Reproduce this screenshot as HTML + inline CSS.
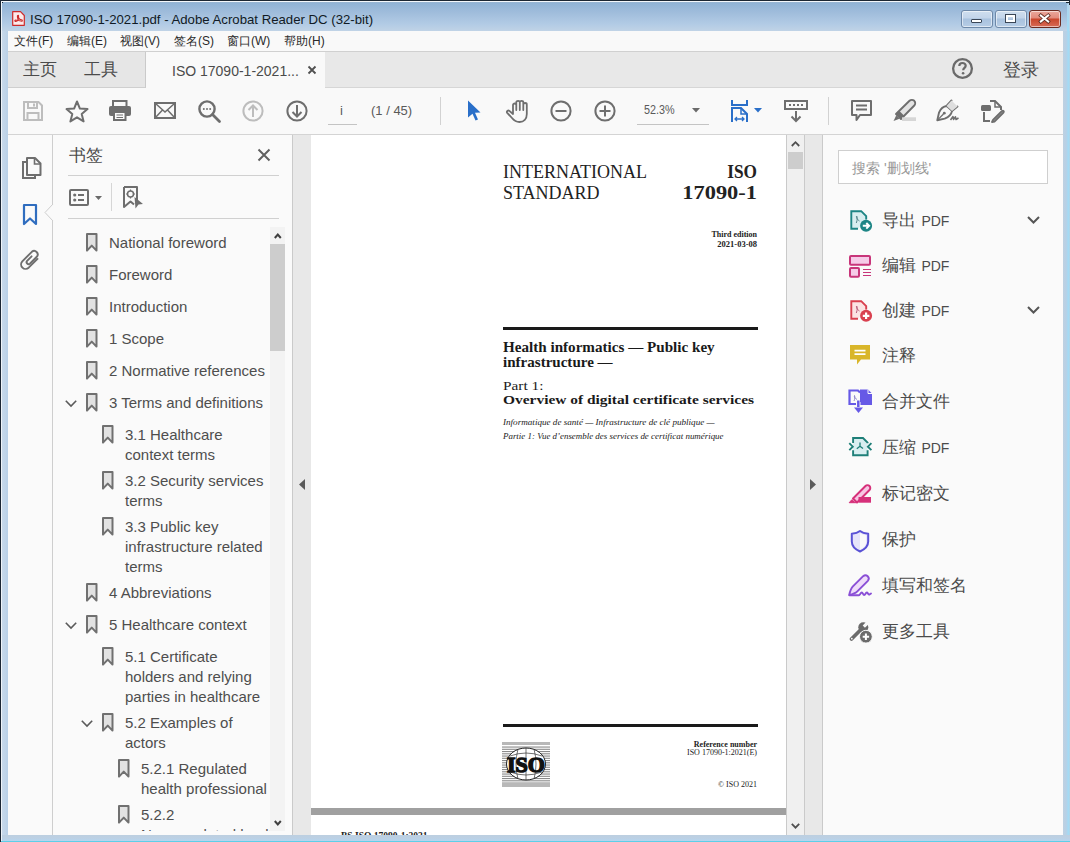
<!DOCTYPE html>
<html><head><meta charset="utf-8"><style>
*{box-sizing:border-box;margin:0;padding:0}
html,body{width:1070px;height:842px;overflow:hidden}
body{position:relative;background:#bcd3e8;font-family:"Liberation Sans",sans-serif;color:#333}
.a{position:absolute}
.t{position:absolute;white-space:nowrap;line-height:1}
svg{position:absolute;overflow:visible}
.bm{color:#4e4e4e;font-size:15px}
.tl{color:#4b4b4b;font-size:17px}
</style></head><body>
<div class="a" style="left:0px;top:0px;width:1070px;height:842px;background:#bcd3e8;"></div>
<div class="a" style="left:2px;top:2px;width:1066px;height:29px;background:linear-gradient(#9cb6cf 0px,#90b3d6 1px,#9fbcdb 10px,#b2cbe5 22px,#c0d3e6 29px);"></div>
<div class="a" style="left:1063px;top:31px;width:7px;height:811px;background:linear-gradient(90deg,#bdd1e2 0px,#b8d0e5 3px,#a6d8f2 5px,#9fdcf6 6px,#b9cfdf 7px);"></div>
<div class="a" style="left:1067px;top:4px;width:2px;height:27px;background:linear-gradient(#b0d4ee,#9fdcf6);"></div>
<div class="a" style="left:1066px;top:0px;width:4px;height:3px;background:#1b2633;"></div>
<div class="a" style="left:1069px;top:3px;width:1px;height:2px;background:#1b2633;"></div>
<div class="a" style="left:0px;top:0px;width:3px;height:3px;background:#1b2633;"></div>
<div class="a" style="left:0px;top:3px;width:2px;height:2px;background:#1b2633;"></div>
<div class="a" style="left:0px;top:835px;width:1070px;height:6px;background:linear-gradient(#bccfe0,#bcd0e4 3px,#b4d4ee);"></div>
<div class="a" style="left:0px;top:841px;width:1070px;height:1px;background:#5ccfe8;"></div>
<div class="a" style="left:0px;top:0px;width:1070px;height:1px;background:#1b2633;"></div>
<div class="a" style="left:0px;top:0px;width:1px;height:842px;background:#1b2633;"></div>
<div class="a" style="left:1px;top:1px;width:1068px;height:1px;background:#f3f7fb;"></div>
<div class="a" style="left:1px;top:1px;width:1px;height:840px;background:#eef3f8;"></div>
<div class="a" style="left:2px;top:31px;width:6px;height:804px;background:linear-gradient(90deg,#c8d9ea,#b9d0e7);"></div>
<svg style="left:12px;top:11px;" width="13" height="15" viewBox="0 0 13 15"><path d="M0.7,0.7 H8.5 L12.3,4.5 V14.3 H0.7 Z" fill="#fdeaea" stroke="#cc2a2a" stroke-width="1.2" stroke-linejoin="round"/><path d="M6.3,4.2 C5,4.2 5.2,6.5 6.3,8.8 C5.5,10 4.2,10.5 3.4,10.4 C2.4,10.2 2.8,8.8 4,9 C5.5,9.2 8.5,10 9.6,10.2 C10.6,10.3 10.6,8.8 9.4,8.8 C8.4,8.8 7,7.8 6.6,6.8 C6.3,5.8 6.8,4.2 6.3,4.2 Z" fill="none" stroke="#cc2a2a" stroke-width="1.1"/></svg>
<div class="t" style="left:30px;top:13px;font-size:13.2px;color:#111a24;">ISO 17090-1-2021.pdf - Adobe Acrobat Reader DC (32-bit)</div>
<div class="a" style="left:961px;top:10px;width:32px;height:18px;border:1px solid #6d88a8;border-radius:3px;background:linear-gradient(#cfdeee 0px,#c3d5ea 7px,#a9c2de 8px,#b8cee6 17px);box-shadow:inset 0 0 0 1px rgba(255,255,255,.55)"></div>
<div class="a" style="left:995px;top:10px;width:32px;height:18px;border:1px solid #6d88a8;border-radius:3px;background:linear-gradient(#cfdeee 0px,#c3d5ea 7px,#a9c2de 8px,#b8cee6 17px);box-shadow:inset 0 0 0 1px rgba(255,255,255,.55)"></div>
<div class="a" style="left:1029px;top:10px;width:32px;height:18px;border:1px solid #6b2a20;border-radius:3px;background:linear-gradient(#eaa89c 0px,#e38b7c 7px,#c9462c 8px,#d9705c 17px);box-shadow:inset 0 0 0 1px rgba(255,255,255,.55)"></div>
<div class="a" style="left:971px;top:19px;width:11px;height:4px;background:#fff;border:1px solid #3a4656;border-radius:1px"></div>
<div class="a" style="left:1005px;top:14px;width:11px;height:9px;background:transparent;border:1px solid #3a4656;box-shadow:inset 0 0 0 2px #fff;"></div>
<svg style="left:1039px;top:14px;" width="11" height="9" viewBox="0 0 11 9"><path d="M1.8,1.5 L9.2,7.5 M9.2,1.5 L1.8,7.5" stroke="#5a2a20" stroke-width="3.6" stroke-linecap="square"/><path d="M1.8,1.5 L9.2,7.5 M9.2,1.5 L1.8,7.5" stroke="#fff" stroke-width="2" stroke-linecap="square"/></svg>
<div class="a" style="left:8px;top:31px;width:1055px;height:20px;background:#f9f9f9;"></div>
<div class="a" style="left:8px;top:51px;width:1055px;height:1px;background:#d0d0d0;"></div>
<div class="t" style="left:14px;top:35px;font-size:12px;color:#2a2a2a;">文件(F)</div>
<div class="t" style="left:67px;top:35px;font-size:12px;color:#2a2a2a;">编辑(E)</div>
<div class="t" style="left:120px;top:35px;font-size:12px;color:#2a2a2a;">视图(V)</div>
<div class="t" style="left:174px;top:35px;font-size:12px;color:#2a2a2a;">签名(S)</div>
<div class="t" style="left:227px;top:35px;font-size:12px;color:#2a2a2a;">窗口(W)</div>
<div class="t" style="left:284px;top:35px;font-size:12px;color:#2a2a2a;">帮助(H)</div>
<div class="a" style="left:8px;top:52px;width:1055px;height:36px;background:#e8e8e8;"></div>
<div class="a" style="left:8px;top:87px;width:1055px;height:1px;background:#d6d6d6;"></div>
<div class="a" style="left:8px;top:52px;width:138px;height:36px;background:#e6e6e6;border-right:1px solid #cacaca;border-bottom:1px solid #cfcfcf"></div>
<div class="a" style="left:146px;top:52px;width:179px;height:36px;background:#f9f9f9;"></div>
<div class="t" style="left:23px;top:61px;font-size:17px;color:#4b4b4b;">主页</div>
<div class="t" style="left:84px;top:61px;font-size:17px;color:#4b4b4b;">工具</div>
<div class="t" style="left:172px;top:64px;font-size:14px;color:#4b4b4b;">ISO 17090-1-2021...</div>
<svg style="left:307px;top:65px;" width="10" height="10" viewBox="0 0 10 10"><path d="M1.5,1.5 L8.5,8.5 M8.5,1.5 L1.5,8.5" stroke="#505050" stroke-width="1.8"/></svg>
<svg style="left:951px;top:57px;" width="23" height="23" viewBox="0 0 23 23"><circle cx="11.5" cy="11.5" r="9.4" fill="none" stroke="#6a6a6a" stroke-width="2.3"/><path d="M8.3,9 C8.3,6.8 9.8,6 11.5,6 C13.3,6 14.7,7.1 14.7,8.8 C14.7,10.8 12.2,11 12.2,13.2" fill="none" stroke="#6a6a6a" stroke-width="2.2"/><circle cx="12.1" cy="16.3" r="1.3" fill="#6a6a6a"/></svg>
<div class="t" style="left:1003px;top:61.5px;font-size:17.5px;color:#4b4b4b;">登录</div>
<div class="a" style="left:8px;top:88px;width:1055px;height:46px;background:#f9f9f9;"></div>
<div class="a" style="left:8px;top:134px;width:1055px;height:1px;background:#d4d4d4;"></div>
<svg style="left:23px;top:101px;" width="20" height="20" viewBox="0 0 20 20"><path d="M1,1 H15.5 L19,4.5 V19 H1 Z" fill="none" stroke="#bdbdbd" stroke-width="2"/><path d="M5,1 V7 H14 V1" fill="none" stroke="#bdbdbd" stroke-width="2"/><path d="M11,2.5 V5.5" stroke="#bdbdbd" stroke-width="2"/><path d="M4.5,19 V12 H15.5 V19" fill="none" stroke="#bdbdbd" stroke-width="2"/></svg>
<svg style="left:65px;top:100px;" width="24" height="23" viewBox="0 0 24 23"><path d="M12,1.5 L14.9,8.6 L22.5,9.1 L16.7,14 L18.6,21.4 L12,17.3 L5.4,21.4 L7.3,14 L1.5,9.1 L9.1,8.6 Z" fill="none" stroke="#6e6e6e" stroke-width="2" stroke-linejoin="round"/></svg>
<svg style="left:108px;top:100px;" width="24" height="21" viewBox="0 0 24 21"><path d="M5,6.5 V1 H18.5 V6.5" fill="none" stroke="#6e6e6e" stroke-width="2"/><rect x="1" y="6" width="22" height="10" rx="2" fill="#6e6e6e"/><rect x="6" y="12" width="11.5" height="8" fill="#f9f9f9" stroke="#6e6e6e" stroke-width="2"/><path d="M8.5,15 H15 M8.5,17.5 H15" stroke="#6e6e6e" stroke-width="1.2"/></svg>
<svg style="left:154px;top:102px;" width="22" height="17" viewBox="0 0 22 17"><rect x="1" y="1" width="20" height="15" fill="none" stroke="#6e6e6e" stroke-width="2"/><path d="M1.5,1.5 L11,10 L20.5,1.5 M1.5,15.5 L8.5,8 M20.5,15.5 L13.5,8" fill="none" stroke="#6e6e6e" stroke-width="1.5"/></svg>
<svg style="left:198px;top:100px;" width="23" height="23" viewBox="0 0 23 23"><circle cx="9" cy="9" r="7.6" fill="none" stroke="#6e6e6e" stroke-width="2.4"/><path d="M14.5,14.5 L21.5,21.5" stroke="#6e6e6e" stroke-width="2.8" stroke-linecap="round"/><circle cx="5.8" cy="9" r="1" fill="#6e6e6e"/><circle cx="9" cy="9" r="1" fill="#6e6e6e"/><circle cx="12.2" cy="9" r="1" fill="#6e6e6e"/></svg>
<svg style="left:242px;top:100px;" width="22" height="22" viewBox="0 0 22 22"><circle cx="11" cy="11" r="9.6" fill="none" stroke="#bdbdbd" stroke-width="2"/><path d="M11,17 V5.5 M6.5,10 L11,5.5 L15.5,10" fill="none" stroke="#bdbdbd" stroke-width="2"/></svg>
<svg style="left:286px;top:100px;" width="22" height="22" viewBox="0 0 22 22"><circle cx="11" cy="11" r="9.6" fill="none" stroke="#6e6e6e" stroke-width="2"/><path d="M11,5 V16.5 M6.5,12 L11,16.5 L15.5,12" fill="none" stroke="#6e6e6e" stroke-width="2"/></svg>
<div class="t" style="left:340px;top:104px;font-size:13px;color:#5a5a5a;">i</div>
<div class="a" style="left:328px;top:124px;width:29px;height:1px;background:#c4c4c4;"></div>
<div class="t" style="left:371px;top:104px;font-size:13px;color:#5a5a5a;">(1 / 45)</div>
<div class="a" style="left:440px;top:97px;width:1px;height:28px;background:#d2d2d2;"></div>
<svg style="left:467px;top:100px;" width="14" height="21" viewBox="0 0 14 21"><path d="M1,0.5 L13.5,12.5 L8,12.8 L11,19.5 L8.5,20.5 L5.5,13.8 L1,17.5 Z" fill="#2a6fc9"/></svg>
<svg style="left:505px;top:99px;" width="24" height="24" viewBox="0 0 24 24"><path d="M8,14.5 V6 C8,4 11.3,4 11.3,6 V11 M11.3,11 V3.3 C11.3,1.3 14.8,1.3 14.8,3.3 V11 M14.8,11 V3.3 C14.8,1.3 18.3,1.3 18.3,3.3 V11 M18.3,11 V5.5 C18.3,3.5 21.8,3.5 21.8,5.5 V15 C21.8,20 18.8,23 14.5,23 C11,23 9,21.5 7,19 L2.2,13.8 C1.2,12.6 3,10.8 4.4,11.9 L8,15" fill="none" stroke="#6e6e6e" stroke-width="1.8" stroke-linejoin="round" stroke-linecap="round"/></svg>
<svg style="left:550px;top:100px;" width="22" height="22" viewBox="0 0 22 22"><circle cx="11" cy="11" r="9.6" fill="none" stroke="#6e6e6e" stroke-width="2"/><path d="M5.5,11 H16.5" stroke="#6e6e6e" stroke-width="2"/></svg>
<svg style="left:594px;top:100px;" width="22" height="22" viewBox="0 0 22 22"><circle cx="11" cy="11" r="9.6" fill="none" stroke="#6e6e6e" stroke-width="2"/><path d="M5.5,11 H16.5 M11,5.5 V16.5" stroke="#6e6e6e" stroke-width="2"/></svg>
<div class="t" style="left:644px;top:104px;font-size:12px;color:#5a5a5a;transform:scaleX(0.9);transform-origin:0 0">52.3%</div>
<div class="a" style="left:637px;top:124px;width:72px;height:1px;background:#c4c4c4;"></div>
<svg style="left:692px;top:108px;" width="9" height="5" viewBox="0 0 9 5"><path d="M0,0 H8 L4,4.5 Z" fill="#6a6a6a"/></svg>
<svg style="left:730px;top:99px;" width="20" height="24" viewBox="0 0 20 24"><path d="M2,1 V6 H17 V1" fill="none" stroke="#2a6fc9" stroke-width="2"/><path d="M2,23 V9 H11 L17,15 V23" fill="none" stroke="#2a6fc9" stroke-width="2"/><path d="M11,9 V15 H17" fill="none" stroke="#2a6fc9" stroke-width="1.5"/><path d="M5,20 H14 M7,18 L5,20 L7,22 M12,18 L14,20 L12,22" fill="none" stroke="#2a6fc9" stroke-width="1.3"/></svg>
<svg style="left:754px;top:108px;" width="9" height="5" viewBox="0 0 9 5"><path d="M0,0 H8 L4,4.5 Z" fill="#2a6fc9"/></svg>
<svg style="left:784px;top:100px;" width="24" height="22" viewBox="0 0 24 22"><rect x="1" y="1" width="22" height="8" fill="none" stroke="#6e6e6e" stroke-width="2"/><path d="M5,5 H7 M9,5 H11 M13,5 H15 M17,5 H19" stroke="#6e6e6e" stroke-width="2"/><path d="M12,11 V21 M7.5,16.5 L12,21 L16.5,16.5" fill="none" stroke="#6e6e6e" stroke-width="2"/></svg>
<div class="a" style="left:828px;top:97px;width:1px;height:28px;background:#d2d2d2;"></div>
<svg style="left:851px;top:100px;" width="21" height="22" viewBox="0 0 21 22"><path d="M1,1 H20 V15 H9 L5.5,20 V15 H1 Z" fill="none" stroke="#6e6e6e" stroke-width="2" stroke-linejoin="round"/><path d="M5,5.5 H16 M5,9.5 H16" stroke="#6e6e6e" stroke-width="1.8"/></svg>
<svg style="left:892px;top:100px;" width="26" height="23" viewBox="0 0 26 23"><path d="M17.5,0.8 C18.8,-0.4 21,-0.4 22.3,0.8 C23.5,2 23.5,4.2 22.3,5.5 L9,19 L4,14 Z" fill="#e3e3e3" stroke="#6e6e6e" stroke-width="1.9" stroke-linejoin="round"/><path d="M4,14 L9,19 L12.2,15.8 L7.2,10.8 Z" fill="#6e6e6e"/><path d="M4.2,15.5 L7.5,18.8 L1.5,21 Z" fill="#6e6e6e"/><rect x="10" y="17.3" width="14" height="3.7" fill="#d6d6d6"/></svg>
<svg style="left:936px;top:99px;" width="24" height="23" viewBox="0 0 24 23"><path d="M10.8,7 L16,11.8 C15.5,15 12.5,18 8.7,19.6 L1.3,21.2 L3,13.6 C4.6,9.8 7.6,7.3 10.8,7 Z" fill="none" stroke="#6e6e6e" stroke-width="1.9" stroke-linejoin="round"/><path d="M10.5,7 L15.5,1.5 M16,12 L21.5,7.5" stroke="#6e6e6e" stroke-width="1.9" stroke-linecap="round"/><path d="M15.5,1.5 L21.5,7.5 L16,12 L10.5,7 Z" fill="#dedede"/><path d="M1.6,20.9 L7.5,15" stroke="#6e6e6e" stroke-width="1.3"/><circle cx="8.3" cy="14.2" r="1.4" fill="#6e6e6e"/><path d="M14.5,21 L17,17.5 L17.5,20.5 L19.5,17.8 L20,20.5 L22.5,19" fill="none" stroke="#6e6e6e" stroke-width="1.5" stroke-linejoin="round"/></svg>
<svg style="left:981px;top:100px;" width="24" height="22" viewBox="0 0 24 22"><path d="M9,1 H14 L20,7 V10" fill="none" stroke="#6e6e6e" stroke-width="2"/><path d="M14,1 V7 H20" fill="none" stroke="#6e6e6e" stroke-width="1.5"/><rect x="0" y="5" width="10" height="6" rx="1.5" fill="#6e6e6e"/><path d="M3,12 V21 H9" fill="none" stroke="#6e6e6e" stroke-width="2"/><path d="M12,20 L21,11 C22,10 23.5,11.5 22.5,12.5 L13.5,21.5 L11,22 Z" fill="none" stroke="#6e6e6e" stroke-width="1.8" stroke-linejoin="round"/></svg>
<div class="a" style="left:8px;top:135px;width:44px;height:700px;background:#fafafa;"></div>
<div class="a" style="left:52px;top:135px;width:1px;height:700px;background:#cecece;"></div>
<div class="a" style="left:53px;top:135px;width:239px;height:700px;background:#fafafa;"></div>
<div class="a" style="left:292px;top:135px;width:1px;height:700px;background:#cacaca;"></div>
<div class="a" style="left:293px;top:135px;width:18px;height:700px;background:#e8e8e8;"></div>
<div class="a" style="left:311px;top:135px;width:475px;height:700px;background:#ffffff;"></div>
<div class="a" style="left:786px;top:135px;width:1px;height:700px;background:#cacaca;"></div>
<div class="a" style="left:787px;top:135px;width:17px;height:700px;background:#f0f0f0;"></div>
<div class="a" style="left:804px;top:135px;width:1px;height:700px;background:#cacaca;"></div>
<div class="a" style="left:805px;top:135px;width:17px;height:700px;background:#e8e8e8;"></div>
<div class="a" style="left:822px;top:135px;width:1px;height:700px;background:#cacaca;"></div>
<div class="a" style="left:823px;top:135px;width:240px;height:700px;background:#fafafa;"></div>
<svg style="left:44px;top:204px;" width="9" height="17" viewBox="0 0 9 17"><path d="M9,0 L1,8.5 L9,17" fill="#fafafa" stroke="#cecece" stroke-width="1"/></svg>
<svg style="left:21px;top:156px;" width="21" height="24" viewBox="0 0 21 24"><path d="M5,6 H2 V22 H14 V19" fill="none" stroke="#6e6e6e" stroke-width="2"/><path d="M6,2 H14 L19.5,7.5 V19 H6 Z" fill="none" stroke="#6e6e6e" stroke-width="2" stroke-linejoin="round"/><path d="M13.5,2 V8 H19.5" fill="none" stroke="#6e6e6e" stroke-width="1.6"/></svg>
<svg style="left:22px;top:203px;" width="16" height="23" viewBox="0 0 16 23"><path d="M2,2 H14 V21 L8,15.5 L2,21 Z" fill="none" stroke="#2f6dbf" stroke-width="2.2" stroke-linejoin="round"/></svg>
<svg style="left:15px;top:245px;" width="30" height="30" viewBox="0 0 30 30"><path d="M22.5,13.9 L13.68,22.68 A4.5,4.5 0 0 1 7.32,16.32 L16.82,6.82 A3.5,3.5 0 0 1 21.76,11.76 L14.91,18.61 A2,2 0 0 1 12.09,15.79 L16.6,11.3" fill="none" stroke="#6e6e6e" stroke-width="1.9" stroke-linecap="round"/></svg>
<div class="t" style="left:69px;top:147px;font-size:16.5px;color:#4b4b4b;">书签</div>
<svg style="left:257px;top:148px;" width="14" height="14" viewBox="0 0 14 14"><path d="M1.5,1.5 L12.5,12.5 M12.5,1.5 L1.5,12.5" stroke="#606060" stroke-width="2"/></svg>
<div class="a" style="left:68px;top:175px;width:211px;height:1px;background:#d0d0d0;"></div>
<svg style="left:69px;top:189px;" width="20" height="17" viewBox="0 0 20 17"><rect x="1" y="1" width="18" height="15" rx="1" fill="none" stroke="#6e6e6e" stroke-width="2"/><circle cx="5.7" cy="6" r="1.6" fill="#6e6e6e"/><circle cx="5.7" cy="11" r="1.6" fill="#6e6e6e"/><path d="M9,6 H15 M9,11 H15" stroke="#6e6e6e" stroke-width="2"/></svg>
<svg style="left:95px;top:196px;" width="8" height="5" viewBox="0 0 8 5"><path d="M0,0 H7 L3.5,4 Z" fill="#6a6a6a"/></svg>
<div class="a" style="left:111px;top:183px;width:1px;height:28px;background:#d6d6d6;"></div>
<svg style="left:122px;top:185px;" width="22" height="25" viewBox="0 0 22 25"><path d="M2,2 H15 V15 M2,2 V22 L8.5,16.5 L12,19.5" fill="none" stroke="#6e6e6e" stroke-width="2" stroke-linejoin="round"/><circle cx="8.5" cy="9" r="3" fill="none" stroke="#6e6e6e" stroke-width="1.5"/><path d="M8.5,4.5 V6 M8.5,12 V13.5 M4,9 H5.5 M11.5,9 H13" stroke="#6e6e6e" stroke-width="1.2"/><path d="M12.5,12 L21,19 L16.5,19.5 L13.5,23.5 Z" fill="#6e6e6e"/></svg>
<div class="a" style="left:68px;top:218px;width:211px;height:1px;background:#d0d0d0;"></div>
<div class="a" style="left:53px;top:220px;width:217px;height:611px;overflow:hidden">
<svg style="left:33px;top:13.199999999999989px" width="12" height="19" viewBox="0 0 12 19"><path d="M1,1 H10.5 V17.6 L5.75,12.6 L1,17.6 Z" fill="#e2e2e2" stroke="#707070" stroke-width="2" stroke-linejoin="round"/></svg>
<div class="t bm" style="left:56px;top:14.699999999999989px">National foreword</div>
<svg style="left:33px;top:45.19999999999999px" width="12" height="19" viewBox="0 0 12 19"><path d="M1,1 H10.5 V17.6 L5.75,12.6 L1,17.6 Z" fill="#e2e2e2" stroke="#707070" stroke-width="2" stroke-linejoin="round"/></svg>
<div class="t bm" style="left:56px;top:46.69999999999999px">Foreword</div>
<svg style="left:33px;top:77.19999999999999px" width="12" height="19" viewBox="0 0 12 19"><path d="M1,1 H10.5 V17.6 L5.75,12.6 L1,17.6 Z" fill="#e2e2e2" stroke="#707070" stroke-width="2" stroke-linejoin="round"/></svg>
<div class="t bm" style="left:56px;top:78.69999999999999px">Introduction</div>
<svg style="left:33px;top:109.19999999999999px" width="12" height="19" viewBox="0 0 12 19"><path d="M1,1 H10.5 V17.6 L5.75,12.6 L1,17.6 Z" fill="#e2e2e2" stroke="#707070" stroke-width="2" stroke-linejoin="round"/></svg>
<div class="t bm" style="left:56px;top:110.69999999999999px">1 Scope</div>
<svg style="left:33px;top:141.2px" width="12" height="19" viewBox="0 0 12 19"><path d="M1,1 H10.5 V17.6 L5.75,12.6 L1,17.6 Z" fill="#e2e2e2" stroke="#707070" stroke-width="2" stroke-linejoin="round"/></svg>
<div class="t bm" style="left:56px;top:142.7px">2 Normative references</div>
<svg style="left:33px;top:173.2px" width="12" height="19" viewBox="0 0 12 19"><path d="M1,1 H10.5 V17.6 L5.75,12.6 L1,17.6 Z" fill="#e2e2e2" stroke="#707070" stroke-width="2" stroke-linejoin="round"/></svg>
<svg style="left:12px;top:180.3px" width="12" height="7" viewBox="0 0 12 7"><path d="M0.8,0.8 L6,6 L11.2,0.8" fill="none" stroke="#5a5a5a" stroke-width="1.6"/></svg>
<div class="t bm" style="left:56px;top:174.7px">3 Terms and definitions</div>
<svg style="left:49px;top:205.2px" width="12" height="19" viewBox="0 0 12 19"><path d="M1,1 H10.5 V17.6 L5.75,12.6 L1,17.6 Z" fill="#e2e2e2" stroke="#707070" stroke-width="2" stroke-linejoin="round"/></svg>
<div class="t bm" style="left:72px;top:206.7px">3.1 Healthcare</div>
<div class="t bm" style="left:72px;top:226.7px">context terms</div>
<svg style="left:49px;top:251.2px" width="12" height="19" viewBox="0 0 12 19"><path d="M1,1 H10.5 V17.6 L5.75,12.6 L1,17.6 Z" fill="#e2e2e2" stroke="#707070" stroke-width="2" stroke-linejoin="round"/></svg>
<div class="t bm" style="left:72px;top:252.7px">3.2 Security services</div>
<div class="t bm" style="left:72px;top:272.7px">terms</div>
<svg style="left:49px;top:297.20000000000005px" width="12" height="19" viewBox="0 0 12 19"><path d="M1,1 H10.5 V17.6 L5.75,12.6 L1,17.6 Z" fill="#e2e2e2" stroke="#707070" stroke-width="2" stroke-linejoin="round"/></svg>
<div class="t bm" style="left:72px;top:298.70000000000005px">3.3 Public key</div>
<div class="t bm" style="left:72px;top:318.70000000000005px">infrastructure related</div>
<div class="t bm" style="left:72px;top:338.70000000000005px">terms</div>
<svg style="left:33px;top:363.20000000000005px" width="12" height="19" viewBox="0 0 12 19"><path d="M1,1 H10.5 V17.6 L5.75,12.6 L1,17.6 Z" fill="#e2e2e2" stroke="#707070" stroke-width="2" stroke-linejoin="round"/></svg>
<div class="t bm" style="left:56px;top:364.70000000000005px">4 Abbreviations</div>
<svg style="left:33px;top:395.20000000000005px" width="12" height="19" viewBox="0 0 12 19"><path d="M1,1 H10.5 V17.6 L5.75,12.6 L1,17.6 Z" fill="#e2e2e2" stroke="#707070" stroke-width="2" stroke-linejoin="round"/></svg>
<svg style="left:12px;top:402.29999999999995px" width="12" height="7" viewBox="0 0 12 7"><path d="M0.8,0.8 L6,6 L11.2,0.8" fill="none" stroke="#5a5a5a" stroke-width="1.6"/></svg>
<div class="t bm" style="left:56px;top:396.70000000000005px">5 Healthcare context</div>
<svg style="left:49px;top:427.20000000000005px" width="12" height="19" viewBox="0 0 12 19"><path d="M1,1 H10.5 V17.6 L5.75,12.6 L1,17.6 Z" fill="#e2e2e2" stroke="#707070" stroke-width="2" stroke-linejoin="round"/></svg>
<div class="t bm" style="left:72px;top:428.70000000000005px">5.1 Certificate</div>
<div class="t bm" style="left:72px;top:448.70000000000005px">holders and relying</div>
<div class="t bm" style="left:72px;top:468.70000000000005px">parties in healthcare</div>
<svg style="left:49px;top:493.20000000000005px" width="12" height="19" viewBox="0 0 12 19"><path d="M1,1 H10.5 V17.6 L5.75,12.6 L1,17.6 Z" fill="#e2e2e2" stroke="#707070" stroke-width="2" stroke-linejoin="round"/></svg>
<svg style="left:28px;top:500.29999999999995px" width="12" height="7" viewBox="0 0 12 7"><path d="M0.8,0.8 L6,6 L11.2,0.8" fill="none" stroke="#5a5a5a" stroke-width="1.6"/></svg>
<div class="t bm" style="left:72px;top:494.70000000000005px">5.2 Examples of</div>
<div class="t bm" style="left:72px;top:514.7px">actors</div>
<svg style="left:65px;top:539.2px" width="12" height="19" viewBox="0 0 12 19"><path d="M1,1 H10.5 V17.6 L5.75,12.6 L1,17.6 Z" fill="#e2e2e2" stroke="#707070" stroke-width="2" stroke-linejoin="round"/></svg>
<div class="t bm" style="left:88px;top:540.7px">5.2.1 Regulated</div>
<div class="t bm" style="left:88px;top:560.7px">health professional</div>
<svg style="left:65px;top:585.2px" width="12" height="19" viewBox="0 0 12 19"><path d="M1,1 H10.5 V17.6 L5.75,12.6 L1,17.6 Z" fill="#e2e2e2" stroke="#707070" stroke-width="2" stroke-linejoin="round"/></svg>
<div class="t bm" style="left:88px;top:586.7px">5.2.2</div>
<div class="t bm" style="left:88px;top:606.7px">Non-regulated health</div>
</div>
<div class="a" style="left:270px;top:227px;width:15px;height:604px;background:#f3f3f3;"></div>
<div class="a" style="left:270px;top:244px;width:15px;height:107px;background:#cdcdcd;"></div>
<svg style="left:274px;top:233px;" width="8" height="6" viewBox="0 0 8 6"><path d="M0.8,5 L3.8,1.5 L6.8,5" fill="none" stroke="#404040" stroke-width="2"/></svg>
<svg style="left:274px;top:820px;" width="8" height="6" viewBox="0 0 8 6"><path d="M0.8,1 L3.8,4.5 L6.8,1" fill="none" stroke="#404040" stroke-width="2"/></svg>
<svg style="left:299px;top:479px;" width="6" height="11" viewBox="0 0 6 11"><path d="M6,0 V11 L0,5.5 Z" fill="#5a5a5a"/></svg>
<svg style="left:810px;top:479px;" width="6" height="11" viewBox="0 0 6 11"><path d="M0,0 V11 L6,5.5 Z" fill="#5a5a5a"/></svg>
<div class="a" style="left:788px;top:152px;width:15px;height:17px;background:#cdcdcd;"></div>
<svg style="left:791px;top:141px;" width="9" height="6" viewBox="0 0 9 6"><path d="M0.8,5 L4.5,1.2 L8.2,5" fill="none" stroke="#505050" stroke-width="1.8"/></svg>
<svg style="left:791px;top:823px;" width="9" height="6" viewBox="0 0 9 6"><path d="M0.8,0.8 L4.5,4.6 L8.2,0.8" fill="none" stroke="#505050" stroke-width="1.8"/></svg>
<div class="t" style="left:503px;top:163px;font-size:18px;color:#222;font-family:'Liberation Serif',serif;">INTERNATIONAL</div>
<div class="t" style="left:503px;top:184px;font-size:18px;color:#222;font-family:'Liberation Serif',serif;">STANDARD</div>
<div class="t" style="left:757px;top:163px;font-size:18px;color:#222;font-family:'Liberation Serif',serif;font-weight:bold;transform:translateX(-100%) scaleX(0.96);transform-origin:100% 0">ISO</div>
<div class="t" style="left:757px;top:184px;font-size:18px;color:#222;font-family:'Liberation Serif',serif;font-weight:bold;transform:translateX(-100%) scaleX(1.246);transform-origin:100% 0">17090-1</div>
<div class="t" style="left:757px;top:231px;font-size:8px;color:#222;font-family:'Liberation Serif',serif;font-weight:bold;transform:translateX(-100%)">Third edition</div>
<div class="t" style="left:757px;top:240px;font-size:8.5px;color:#222;font-family:'Liberation Serif',serif;font-weight:bold;transform:translateX(-100%)">2021-03-08</div>
<div class="a" style="left:503px;top:327px;width:255px;height:3px;background:#1a1a1a;"></div>
<div class="t" style="left:503px;top:341px;font-size:14px;color:#1a1a1a;font-family:'Liberation Serif',serif;font-weight:bold;transform:scaleX(1.08);transform-origin:0 0">Health informatics — Public key</div>
<div class="t" style="left:503px;top:356px;font-size:14px;color:#1a1a1a;font-family:'Liberation Serif',serif;font-weight:bold;transform:scaleX(1.075);transform-origin:0 0">infrastructure —</div>
<div class="t" style="left:503px;top:379px;font-size:13px;color:#1a1a1a;font-family:'Liberation Serif',serif;transform:scaleX(1.18);transform-origin:0 0">Part 1:</div>
<div class="t" style="left:503px;top:393px;font-size:13.5px;color:#1a1a1a;font-family:'Liberation Serif',serif;font-weight:bold;transform:scaleX(1.143);transform-origin:0 0">Overview of digital certificate services</div>
<div class="t" style="left:503px;top:418px;font-size:9px;color:#222;font-family:'Liberation Serif',serif;font-style:italic;transform:scaleX(1.012);transform-origin:0 0">Informatique de santé — Infrastructure de clé publique —</div>
<div class="t" style="left:503px;top:432px;font-size:9px;color:#222;font-family:'Liberation Serif',serif;font-style:italic;transform:scaleX(0.99);transform-origin:0 0">Partie 1: Vue d’ensemble des services de certificat numérique</div>
<div class="a" style="left:503px;top:724px;width:255px;height:3px;background:#1a1a1a;"></div>
<svg style="left:502px;top:742px;" width="48" height="45" viewBox="0 0 48 45"><rect x="0" y="0" width="48" height="3" fill="#b8b8b8"/><rect x="0" y="42" width="48" height="3" fill="#b8b8b8"/><rect x="0" y="4.50" width="48" height="1.1" fill="#8a8a8a"/><rect x="0" y="6.75" width="48" height="1.1" fill="#8a8a8a"/><rect x="0" y="9.00" width="48" height="1.1" fill="#8a8a8a"/><rect x="0" y="11.25" width="48" height="1.1" fill="#8a8a8a"/><rect x="0" y="13.50" width="48" height="1.1" fill="#8a8a8a"/><rect x="0" y="15.75" width="48" height="1.1" fill="#8a8a8a"/><rect x="0" y="18.00" width="48" height="1.1" fill="#8a8a8a"/><rect x="0" y="20.25" width="48" height="1.1" fill="#8a8a8a"/><rect x="0" y="22.50" width="48" height="1.1" fill="#8a8a8a"/><rect x="0" y="24.75" width="48" height="1.1" fill="#8a8a8a"/><rect x="0" y="27.00" width="48" height="1.1" fill="#8a8a8a"/><rect x="0" y="29.25" width="48" height="1.1" fill="#8a8a8a"/><rect x="0" y="31.50" width="48" height="1.1" fill="#8a8a8a"/><rect x="0" y="33.75" width="48" height="1.1" fill="#8a8a8a"/><rect x="0" y="36.00" width="48" height="1.1" fill="#8a8a8a"/><rect x="0" y="38.25" width="48" height="1.1" fill="#8a8a8a"/><rect x="0" y="40.50" width="48" height="1.1" fill="#8a8a8a"/><ellipse cx="24" cy="22" rx="19.5" ry="16" fill="#fff" stroke="#222" stroke-width="1"/><path d="M8,14 Q24,8 40,14 M8,30 Q24,36 40,30 M16,7 Q12,22 16,37 M32,7 Q36,22 32,37 M24,6 V38" fill="none" stroke="#333" stroke-width="0.7"/><text x="24" y="29.5" font-family="Liberation Serif" font-weight="bold" font-size="20" fill="#111" stroke="#111" stroke-width="1.3" text-anchor="middle" textLength="38" lengthAdjust="spacingAndGlyphs">ISO</text></svg>
<div class="t" style="left:757px;top:741px;font-size:8px;color:#222;font-family:'Liberation Serif',serif;font-weight:bold;transform:translateX(-100%)">Reference number</div>
<div class="t" style="left:757px;top:749px;font-size:8px;color:#222;font-family:'Liberation Serif',serif;transform:translateX(-100%)">ISO 17090-1:2021(E)</div>
<div class="t" style="left:757px;top:781px;font-size:8px;color:#222;font-family:'Liberation Serif',serif;transform:translateX(-100%)">© ISO 2021</div>
<div class="a" style="left:311px;top:808px;width:475px;height:7px;background:#a0a0a0;"></div>
<div class="a" style="left:311px;top:815px;width:475px;height:20px;overflow:hidden">
<div class="t" style="left:30px;top:17px;font-size:9.5px;color:#222;font-weight:bold;font-family:'Liberation Serif',serif;">BS ISO 17090-1:2021</div>
</div>
<div class="a" style="left:838px;top:150px;width:210px;height:34px;background:#fff;border:1px solid #cfcfcf"></div>
<div class="t" style="left:852px;top:161px;font-size:14px;color:#999;">搜索 '删划线'</div>
<div class="t" style="left:882px;top:211.5px;font-size:17px;color:#4b4b4b;">导出<span style="font-size:14px;margin-left:1.5px"> PDF</span></div>
<svg style="left:1027px;top:216px;" width="13" height="8" viewBox="0 0 13 8"><path d="M1,1 L6.5,6.5 L12,1" fill="none" stroke="#555" stroke-width="2"/></svg>
<div class="t" style="left:882px;top:256.5px;font-size:17px;color:#4b4b4b;">编辑<span style="font-size:14px;margin-left:1.5px"> PDF</span></div>
<div class="t" style="left:882px;top:301.5px;font-size:17px;color:#4b4b4b;">创建<span style="font-size:14px;margin-left:1.5px"> PDF</span></div>
<svg style="left:1027px;top:306px;" width="13" height="8" viewBox="0 0 13 8"><path d="M1,1 L6.5,6.5 L12,1" fill="none" stroke="#555" stroke-width="2"/></svg>
<div class="t" style="left:882px;top:346.5px;font-size:17px;color:#4b4b4b;">注释</div>
<div class="t" style="left:882px;top:392.5px;font-size:17px;color:#4b4b4b;">合并文件</div>
<div class="t" style="left:882px;top:438.5px;font-size:17px;color:#4b4b4b;">压缩<span style="font-size:14px;margin-left:1.5px"> PDF</span></div>
<div class="t" style="left:882px;top:484.5px;font-size:17px;color:#4b4b4b;">标记密文</div>
<div class="t" style="left:882px;top:530.5px;font-size:17px;color:#4b4b4b;">保护</div>
<div class="t" style="left:882px;top:576.5px;font-size:17px;color:#4b4b4b;">填写和签名</div>
<div class="t" style="left:882px;top:622.5px;font-size:17px;color:#4b4b4b;">更多工具</div>
<svg style="left:848px;top:208px;" width="24" height="24" viewBox="0 0 24 24"><path d="M10,20.7 H3.3 V3.2 H13.2 L18.2,8.2 V11.5" fill="#d8eef0" stroke="#1d8585" stroke-width="1.9" stroke-linejoin="miter"/><path d="M8.3,15 C9.5,12 9.5,9 8.7,8 C8,9 8.5,11 11.5,13" fill="none" stroke="#4a7a80" stroke-width="0.9"/><circle cx="18.1" cy="17.8" r="6" fill="#1d8585"/><path d="M14.8,17.8 H21 M18.3,15 L21.1,17.8 L18.3,20.6" fill="none" stroke="#fff" stroke-width="2"/></svg>
<svg style="left:848px;top:253px;" width="24" height="24" viewBox="0 0 24 24"><rect x="2" y="3" width="20" height="8.7" rx="1" fill="#f6cbe8" stroke="#c8357a" stroke-width="2"/><rect x="2" y="15" width="9" height="8.8" rx="1" fill="#f6cbe8" stroke="#c8357a" stroke-width="2"/><path d="M15,16.5 H23 M15,19.5 H23 M15,22.5 H23" stroke="#c8357a" stroke-width="1.1"/></svg>
<svg style="left:848px;top:298px;" width="24" height="24" viewBox="0 0 24 24"><path d="M10,20.7 H3.3 V3.2 H13.2 L18.2,8.2 V11.5" fill="#fbe3e3" stroke="#d9404f" stroke-width="1.9" stroke-linejoin="miter"/><path d="M8.3,15 C9.5,12 9.5,9 8.7,8 C8,9 8.5,11 11.5,13" fill="none" stroke="#b05070" stroke-width="0.9"/><circle cx="18.1" cy="17.8" r="6" fill="#d9404f"/><path d="M14.8,17.8 H21.4 M18.1,14.5 V21.1" fill="none" stroke="#fff" stroke-width="2.2"/></svg>
<svg style="left:848px;top:343px;" width="24" height="24" viewBox="0 0 24 24"><path d="M2,2 H22 V16.5 H13 L9,21.5 V16.5 H2 Z" fill="#d9b62a"/><path d="M6.5,7.7 H17.5 M6.5,11.2 H17.5" stroke="#fff" stroke-width="1.8"/></svg>
<svg style="left:848px;top:389px;" width="24" height="24" viewBox="0 0 24 24"><path d="M8,15 H1.5 V1.5 H10 L12,3.5" fill="none" stroke="#6659e6" stroke-width="2.2"/><path d="M6,12 C7,10 7,7.5 6.5,6.5 C6,7.5 6.5,9 9,10.5" fill="none" stroke="#7a70c0" stroke-width="0.8"/><path d="M12,0.5 H20 L24,4.5 V16 H12.5 V13 H12 Z" fill="#6659e6"/><path d="M20,0.5 V4.5 H24" fill="none" stroke="#fafafa" stroke-width="1"/><path d="M10.3,11.5 V18" stroke="#6659e6" stroke-width="2.5"/><path d="M6,18.5 H15 L10.5,24 Z" fill="#6659e6"/></svg>
<svg style="left:848px;top:435px;" width="24" height="24" viewBox="0 0 24 24"><path d="M5.1,3 H15 L19.6,7.6 V20.2 H5.1 Z" fill="#d8eef0"/><path d="M5.1,8 V3 H15 L19.6,7.6 V8.3 M5.1,15.2 V20.2 H19.6 V15.2" fill="none" stroke="#1e7f78" stroke-width="1.9" stroke-linejoin="miter"/><path d="M1.3,8.2 L4.8,11.7 L1.3,15.2 M23.4,8.2 L19.9,11.7 L23.4,15.2" fill="none" stroke="#1e7f78" stroke-width="1.9"/><path d="M12,7.5 V11.2 L8.8,13.8 M12,11.2 L15,13.4" fill="none" stroke="#1e7f78" stroke-width="1.3"/></svg>
<svg style="left:848px;top:481px;" width="24" height="24" viewBox="0 0 24 24"><path d="M5,17.5 L17.5,5 C18.5,4 20.5,4 21.5,5 C22.5,6 22.5,8 21.5,9 L9,21.5 Z" fill="#f7c6e3" stroke="#d6307a" stroke-width="2" stroke-linejoin="round"/><path d="M4,18.5 L1.2,21.7 H8" fill="#d6307a" stroke="#d6307a" stroke-width="1"/><rect x="10.5" y="16" width="12.5" height="5.7" fill="#d6307a"/></svg>
<svg style="left:848px;top:527px;" width="24" height="24" viewBox="0 0 24 24"><path d="M12,4 C9.5,6 7,6.5 3.8,6.8 V14.5 C3.8,19.5 7.5,22.5 12,24.5 C16.5,22.5 20.2,19.5 20.2,14.5 V6.8 C17,6.5 14.5,6 12,4 Z" fill="#e6e4fa" stroke="#5a52d5" stroke-width="2" stroke-linejoin="round"/><path d="M12,6 V22.5 C15.5,21 18.2,18.5 18.2,14.5 V8.2 C16,8 14,7.5 12,6 Z" fill="#fafafa"/></svg>
<svg style="left:848px;top:573px;" width="24" height="24" viewBox="0 0 24 24"><path d="M9.33,18.33 L19.83,7.83 A3.3,3.3 0 0 0 15.17,3.17 L4.67,13.67 C3,15.5 2,18.5 1.2,22 C4.5,21.2 7.5,20.2 9.33,18.33 Z" fill="#efdcfa" stroke="#8a4fd6" stroke-width="1.9" stroke-linejoin="round"/><path d="M1.5,22.2 H11 C12,22.2 12.5,19.5 13.8,19.5 C15,19.5 14.8,22 16.2,22 C17.5,22 17.5,19.5 18.8,19.5 C20,19.5 20,22 21.5,21.5 L23,20.5" fill="none" stroke="#8a4fd6" stroke-width="1.9" stroke-linecap="round" stroke-linejoin="round"/></svg>
<svg style="left:848px;top:619px;" width="24" height="24" viewBox="0 0 24 24"><path d="M3.5,20 L12.5,11" stroke="#6b6b6b" stroke-width="3.8" stroke-linecap="round"/><circle cx="15.3" cy="8.2" r="5" fill="#6b6b6b"/><path d="M15.8,7.7 L20.5,3" stroke="#fafafa" stroke-width="3.2" stroke-linecap="butt"/><circle cx="3.8" cy="19.7" r="0.9" fill="#fafafa"/><circle cx="17.9" cy="17.7" r="6.4" fill="#6b6b6b" stroke="#fafafa" stroke-width="1"/><path d="M14.7,17.7 H21.1 M17.9,14.5 V20.9" stroke="#fff" stroke-width="2"/></svg>
</body></html>
